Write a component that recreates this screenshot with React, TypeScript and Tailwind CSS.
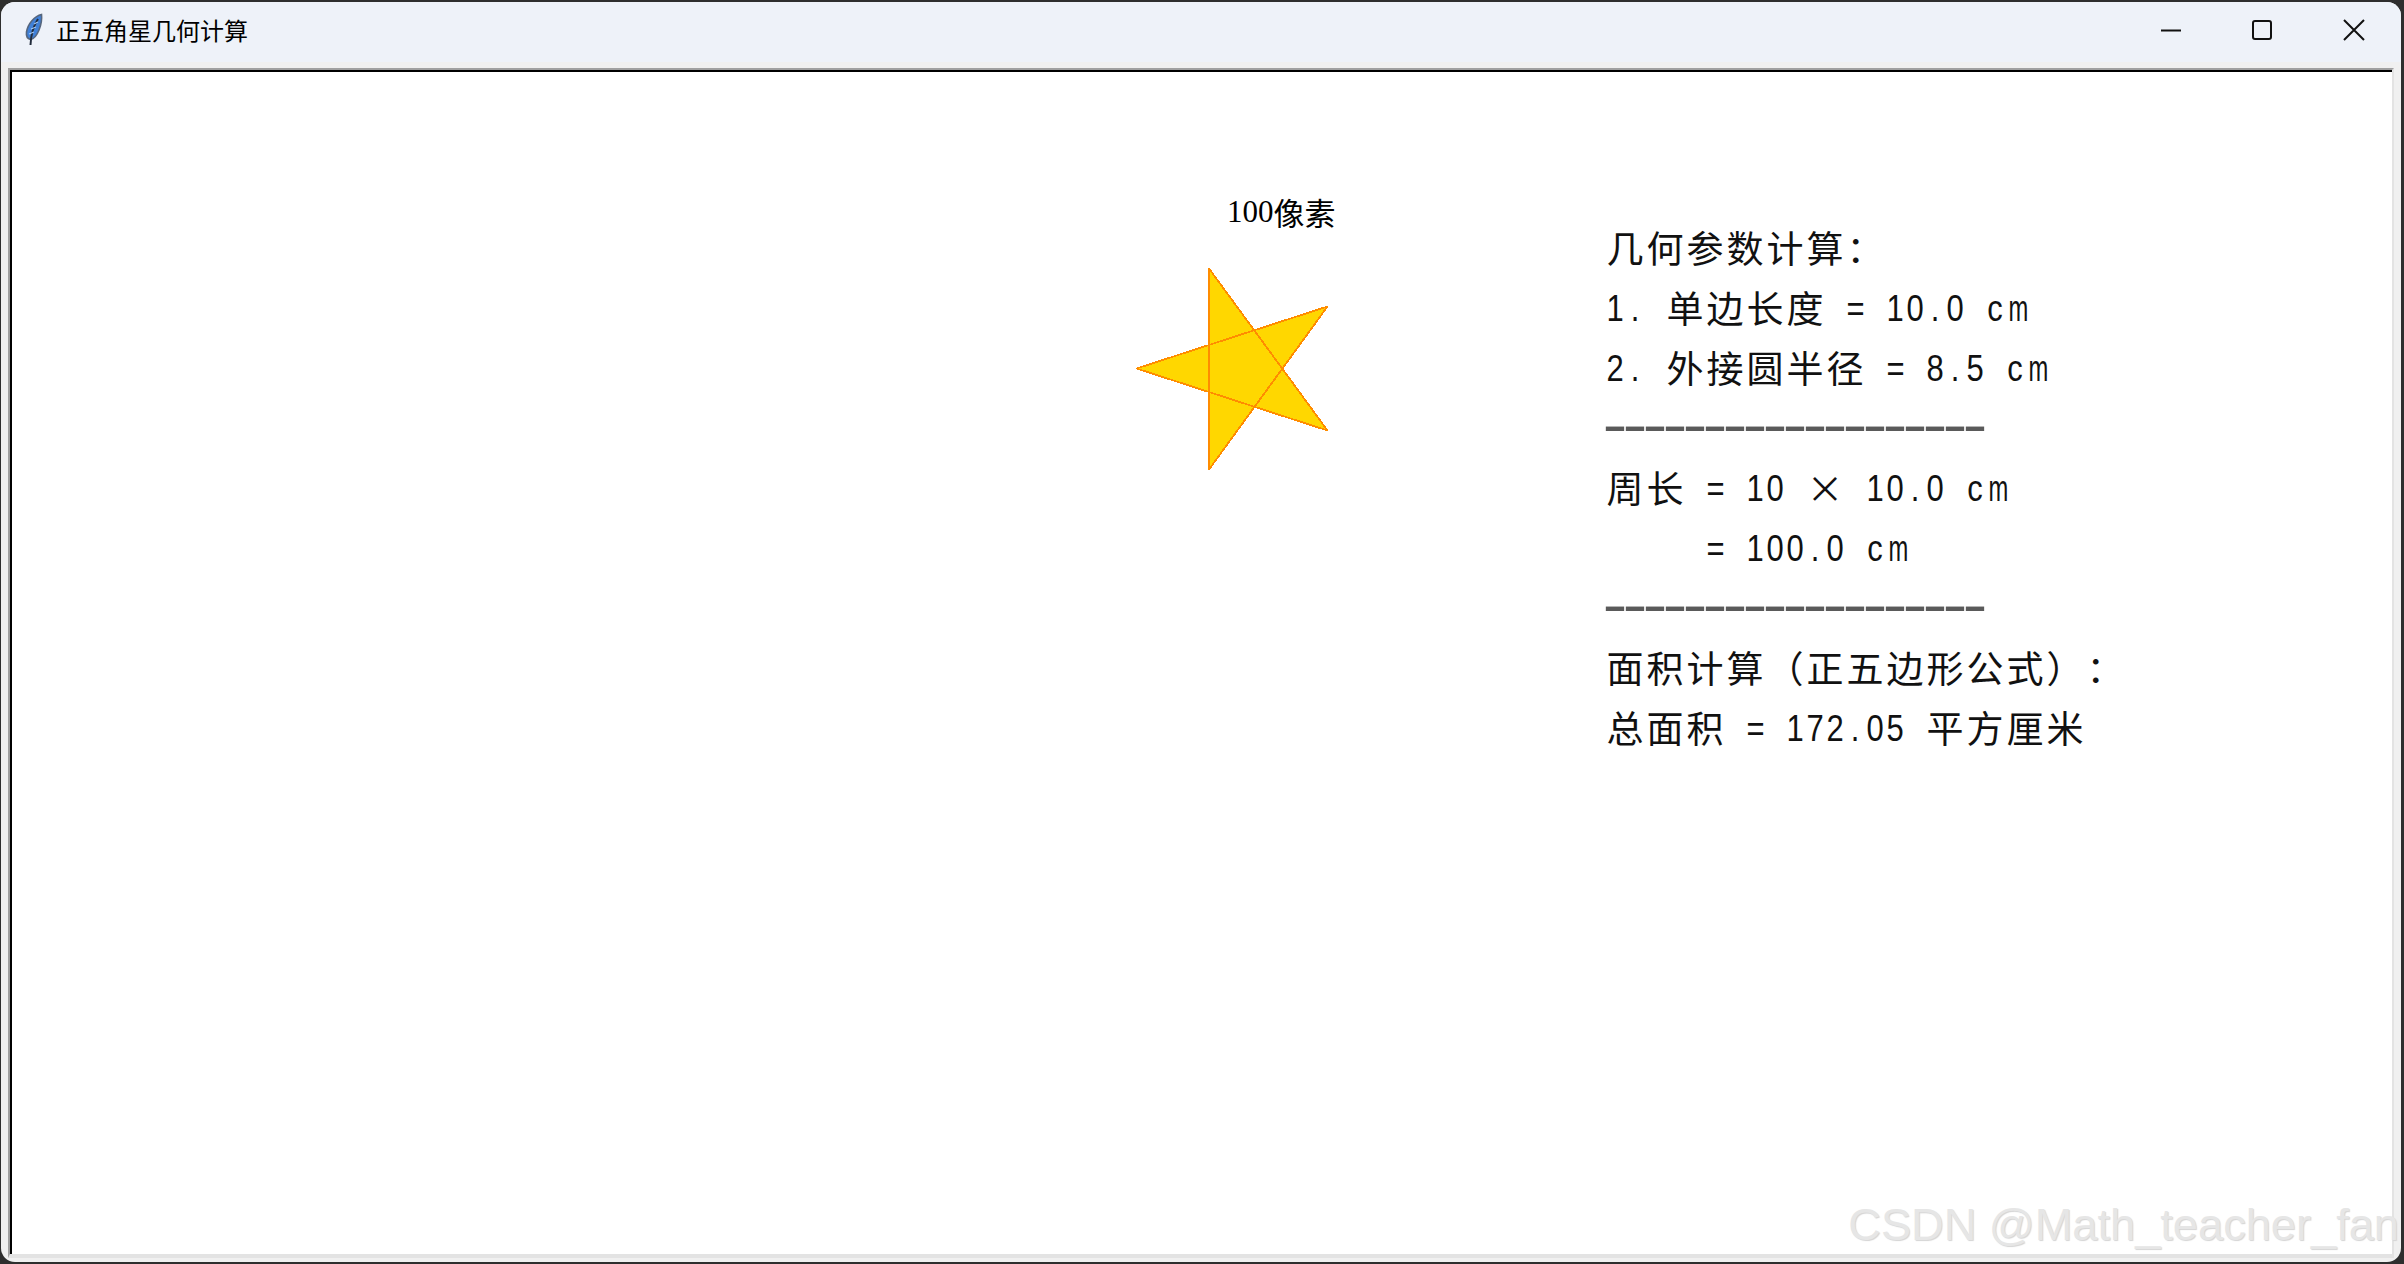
const CJK = "font-['Noto_Sans_CJK_SC','Liberation_Sans',sans-serif]";

function Cell({ ch }: { ch: string }) {
  const wide = /[^\x00-\x7f]/.test(ch);
  if (ch === "-") {
    return <span className="inline-block w-[20px] pb-[2px] text-center scale-x-[1.95] font-bold text-[#5a5a5a] font-['Liberation_Sans',sans-serif]">-</span>;
  }
  if (ch === "m") {
    return <span className="inline-block w-[20px] pt-[4px] text-center font-['Liberation_Sans',sans-serif] text-[36px] scale-x-[0.66]">m</span>;
  }
  return wide ? (
    <span className="inline-block w-[40px] text-center">{ch}</span>
  ) : (
    <span className="inline-block w-[20px] pt-[4px] text-center whitespace-pre font-['Liberation_Sans',sans-serif] text-[36px] scale-x-[0.86]">{ch}</span>
  );
}

function Line({ text }: { text: string }) {
  return (
    <div className="flex items-center h-[60px] whitespace-pre">
      {Array.from(text).map((c, i) => (
        <Cell key={i} ch={c} />
      ))}
    </div>
  );
}

const lines = [
  "几何参数计算：",
  "1. 单边长度 = 10.0 cm",
  "2. 外接圆半径 = 8.5 cm",
  "-------------------",
  "周长 = 10 × 10.0 cm",
  "     = 100.0 cm",
  "-------------------",
  "面积计算（正五边形公式）：",
  "总面积 = 172.05 平方厘米",
];

function Feather() {
  return (
    <svg width="20" height="34" viewBox="0 0 20 34" className="shrink-0">
      <path d="M17.5 1.5 C11 3 4 10 2.5 19 C2 23 3 25.5 6.5 26.5 C10 26 13 22 15 17 C17 12 18 6 17.5 1.5 Z" fill="#3f80d8" stroke="#56667e" strokeWidth="1.6" />
      <path d="M14 6 C10 12 7 20 6.5 32" fill="none" stroke="#222c3c" strokeWidth="2" />
      <path d="M14 9 L10 11 M12 14 L7 16 M10 19 L5 21" stroke="#a4c8f4" strokeWidth="1.2" />
    </svg>
  );
}

function Star() {
  return (
    <svg width="200" height="210" viewBox="0 0 200 210" className="shrink-0" shapeRendering="crispEdges">
      <polygon
        points="77,3.5 77,204.5 195.5,41.5 4.5,103.5 195.5,165.5"
        fill="#FFD700"
        stroke="#FF8C00"
        strokeWidth="1.8"
        strokeLinejoin="bevel"
      />
    </svg>
  );
}

export default function App() {
  return (
    <div className={`w-[2404px] h-[1264px] bg-[#2e2e2e] pt-[2px] pb-[2px] pl-[1px] pr-[3px] overflow-hidden ${CJK}`}>
      <div className="relative h-full rounded-[14px] overflow-hidden bg-[#f0f0f0] flex flex-col">
        <div className="h-[60px] shrink-0 bg-[#eef2f9] flex items-center pl-[23px] pr-[36px] pb-[4px] text-black">
          <Feather />
          <span className="ml-[12px] text-[24px] leading-none">正五角星几何计算</span>
          <div className="ml-auto flex items-center gap-[71px]">
            <svg width="20" height="20" viewBox="0 0 20 20"><path d="M0 10.5H20" stroke="#111" strokeWidth="2" /></svg>
            <svg width="20" height="20" viewBox="0 0 20 20"><rect x="1" y="1" width="18" height="18" rx="2" fill="none" stroke="#111" strokeWidth="2" /></svg>
            <svg width="22" height="22" viewBox="0 0 22 22"><path d="M1 1L21 21M21 1L1 21" stroke="#111" strokeWidth="2" /></svg>
          </div>
        </div>
        <div className="flex-1 mx-[7px] mt-[6px] mb-[4px] border-t-2 border-l-2 border-t-[#a0a0a0] border-l-[#a0a0a0] border-r-2 border-b-4 border-r-[#e3e3e3] border-b-[#e3e3e3] min-h-0">
          <div className="h-full bg-white border-t-2 border-l-2 border-black overflow-hidden flex items-start pt-[118px] pl-[1120px]">
            <div className="w-[200px] shrink-0 flex flex-col">
              <div className="h-[44px] pl-[95px] flex items-center whitespace-nowrap text-[31px] leading-[44px] text-black">
                <span className="font-['Liberation_Serif',serif] text-[31px]">100</span>
                <span>像素</span>
              </div>
              <div className="mt-[31px]">
                <Star />
              </div>
            </div>
            <div className="ml-[273px] mt-[27px] text-[37px] leading-[60px] text-[#111]">
              {lines.map((l, i) => (
                <Line key={i} text={l} />
              ))}
            </div>
          </div>
        </div>
        <div className="absolute right-[2px] bottom-[15px] font-['Liberation_Sans',sans-serif] text-[45.2px] leading-none text-[#e6e6e6] [text-shadow:1px_1px_1px_#d4d4d4] whitespace-nowrap">
          CSDN @Math_teacher_fan
        </div>
      </div>
    </div>
  );
}
